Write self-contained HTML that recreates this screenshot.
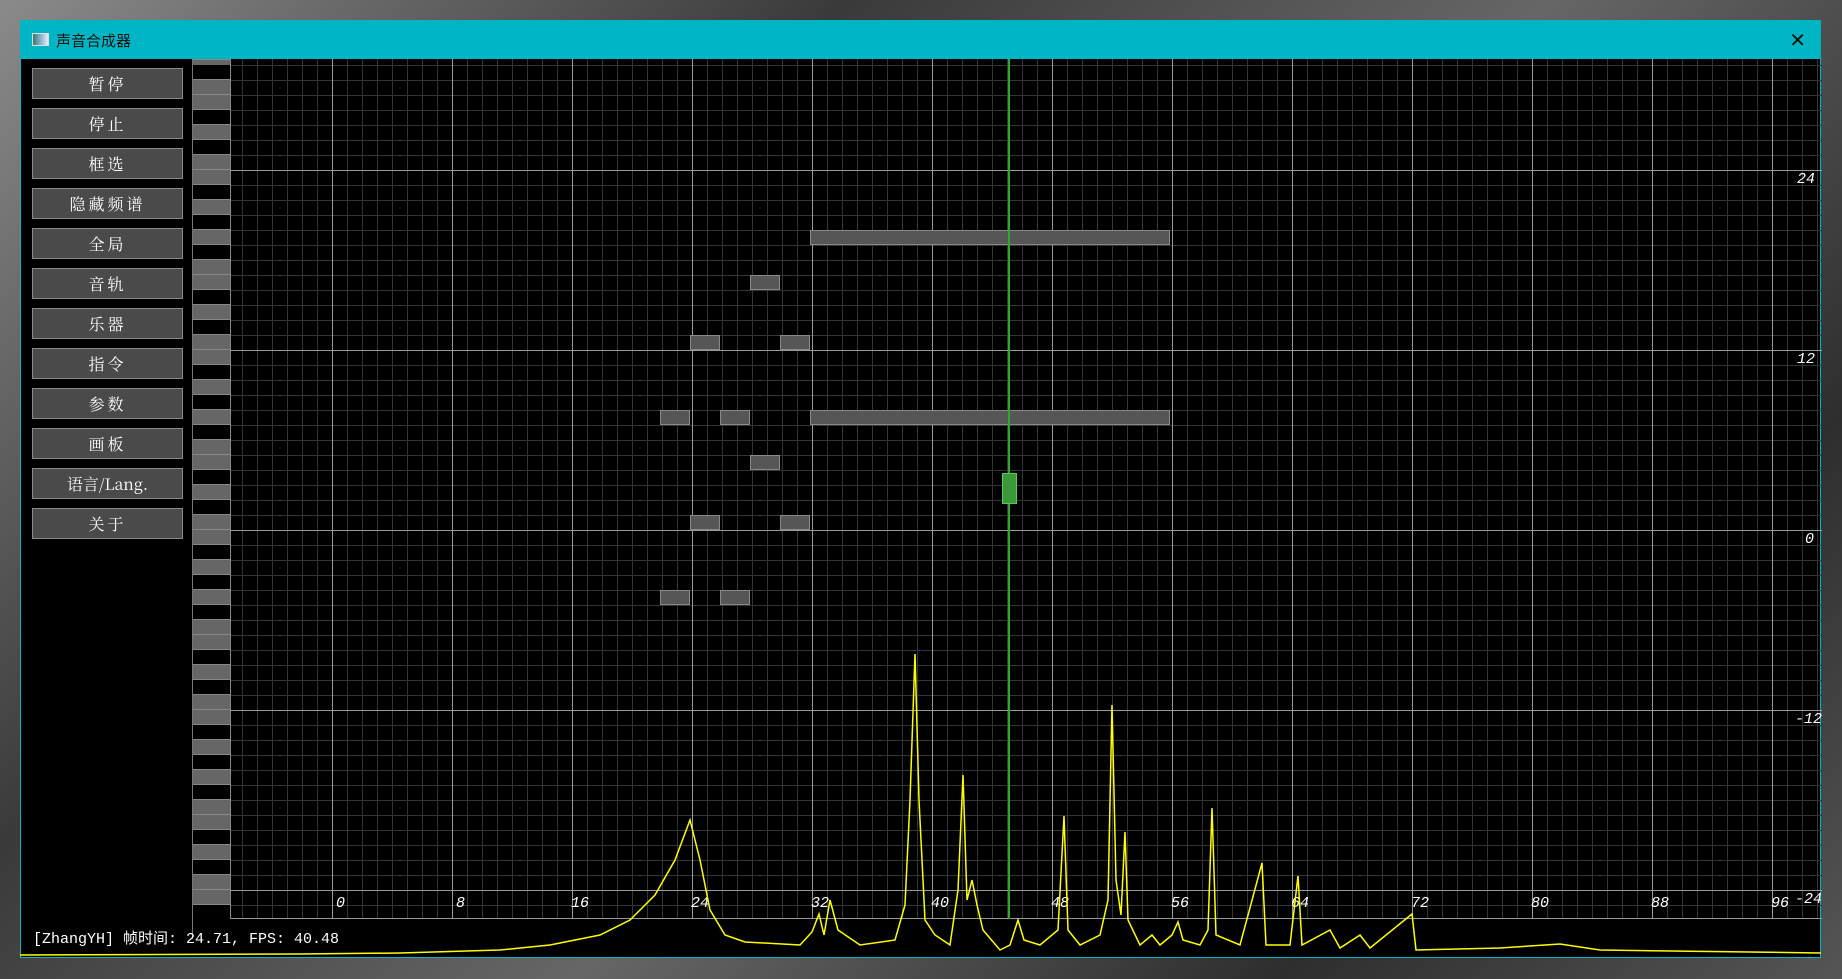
<!DOCTYPE html>
<html><head><meta charset="utf-8"><style>
*{margin:0;padding:0;box-sizing:border-box}
body{width:1842px;height:979px;overflow:hidden;background:#5a5a5a;position:relative;font-family:"Liberation Sans","Noto Sans CJK SC",sans-serif}
.bg{position:absolute;inset:0;background:linear-gradient(135deg,#8a8a8a 0%,#3a3a3a 30%,#666 55%,#2e2e2e 80%,#555 100%)}
.win{position:absolute;left:20px;top:20px;width:1801px;height:938px;background:#000;border:1px solid #00b4c3}
.title{position:absolute;left:0;top:0;width:100%;height:38px;background:#00b6c4}
.title .ic{position:absolute;left:11px;top:12px;width:17px;height:13px;background:linear-gradient(90deg,#3a7a6a,#9bd 60%,#eee);border:1px solid #ddd}
.title .t{position:absolute;left:35px;top:9px;font-size:15px;color:#111;font-family:"Noto Sans CJK SC",sans-serif}
.title .x{position:absolute;right:14px;top:7px;font-size:20px;color:#111}
.btn{position:absolute;left:11px;width:151px;height:31px;background:#4a4a4a;border:1px solid #8a8a8a;color:#fff;font-size:16px;text-align:center;line-height:29px;font-family:"Noto Serif CJK SC","Liberation Mono",serif;letter-spacing:3px}
.lp{position:absolute;left:0;top:38px;width:172px;height:880px;border-right:1px solid #777}
.keys{position:absolute;left:172px;top:38px;width:38px;height:860px;overflow:hidden;border-right:1px solid #888}
.grid{position:absolute;left:210px;top:38px;width:1591px;height:860px;
background-image:
linear-gradient(to right,#9a9a9a 1px,transparent 1px),
linear-gradient(to bottom,#9a9a9a 1px,transparent 1px),
linear-gradient(to right,#353535 1px,transparent 1px),
linear-gradient(to bottom,#353535 1px,transparent 1px);
background-size:120px 100%,100% 180px,15px 100%,100% 15px;
background-position:101px 0,0 111px,11px 0,0 6px;border-bottom:1px solid #999}
.n{position:absolute;height:15px;background:#565656;border:1px solid #8a8a8a}
.lbl{position:absolute;color:#fff;font-size:15px;font-family:"Liberation Mono",monospace;font-style:italic}
.status{position:absolute;left:12px;top:906px;color:#fff;font-size:15px;font-family:"Liberation Mono","Noto Sans CJK SC",monospace}
</style></head><body>
<div class="bg"></div>
<div class="win">
<div class="title"><div class="ic"></div><div class="t">声音合成器</div><div class="x">✕</div></div>
<div class="lp">
<div class="btn" style="top:9px">暂停</div>
<div class="btn" style="top:49px">停止</div>
<div class="btn" style="top:89px">框选</div>
<div class="btn" style="top:129px">隐藏频谱</div>
<div class="btn" style="top:169px">全局</div>
<div class="btn" style="top:209px">音轨</div>
<div class="btn" style="top:249px">乐器</div>
<div class="btn" style="top:289px">指令</div>
<div class="btn" style="top:329px">参数</div>
<div class="btn" style="top:369px">画板</div>
<div class="btn" style="top:409px;letter-spacing:0">语言/Lang.</div>
<div class="btn" style="top:449px">关于</div>
</div>
<div class="keys" style="background:repeating-linear-gradient(to bottom,#000 0 15px,#666 15px 45px,#000 45px 60px,#666 60px 75px,#000 75px 90px,#666 90px 120px,#000 120px 135px,#666 135px 150px,#000 150px 165px,#666 165px 180px);background-position:0 6px"></div>
<div class="keys" style="background:repeating-linear-gradient(to bottom,transparent 0 14px,#888 14px 15px);background-position:0 6px"></div>
<div class="grid"></div>
<div class="n" style="left:789px;top:209px;width:360px"></div>
<div class="n" style="left:729px;top:254px;width:30px"></div>
<div class="n" style="left:669px;top:314px;width:30px"></div>
<div class="n" style="left:759px;top:314px;width:30px"></div>
<div class="n" style="left:639px;top:389px;width:30px"></div>
<div class="n" style="left:699px;top:389px;width:30px"></div>
<div class="n" style="left:789px;top:389px;width:360px"></div>
<div class="n" style="left:729px;top:434px;width:30px"></div>
<div class="n" style="left:669px;top:494px;width:30px"></div>
<div class="n" style="left:759px;top:494px;width:30px"></div>
<div class="n" style="left:639px;top:569px;width:30px"></div>
<div class="n" style="left:699px;top:569px;width:30px"></div>
<div style="position:absolute;left:987px;top:38px;width:2px;height:860px;background:#2fa82f"></div>
<div style="position:absolute;left:981px;top:452px;width:15px;height:31px;background:#3a9a3a;border:1px solid #5c5"></div>
<div class="lbl" style="left:315px;top:874px">0</div>
<div class="lbl" style="left:435px;top:874px">8</div>
<div class="lbl" style="left:550px;top:874px">16</div>
<div class="lbl" style="left:670px;top:874px">24</div>
<div class="lbl" style="left:790px;top:874px">32</div>
<div class="lbl" style="left:910px;top:874px">40</div>
<div class="lbl" style="left:1030px;top:874px">48</div>
<div class="lbl" style="left:1150px;top:874px">56</div>
<div class="lbl" style="left:1270px;top:874px">64</div>
<div class="lbl" style="left:1390px;top:874px">72</div>
<div class="lbl" style="left:1510px;top:874px">80</div>
<div class="lbl" style="left:1630px;top:874px">88</div>
<div class="lbl" style="left:1750px;top:874px">96</div>
<div class="lbl" style="left:1774px;top:870px">-24</div>
<div class="lbl" style="left:1774px;top:690px">-12</div>
<div class="lbl" style="left:1784px;top:510px">0</div>
<div class="lbl" style="left:1776px;top:330px">12</div>
<div class="lbl" style="left:1776px;top:150px">24</div>
<div class="status">[ZhangYH] 帧时间: 24.71, FPS: 40.48</div>
</div>
<svg style="position:absolute;left:0;top:0" width="1842" height="979">
<polyline fill="none" stroke="#ffff00" stroke-width="1.5" points="20,955 300,954 400,953 500,950 550,945 600,935 630,920 655,895 675,860 690,820 700,860 710,910 725,935 745,942 800,945 812,932 819,914 824,935 830,900 838,930 860,945 895,940 905,905 910,800 915,654 919,800 925,920 935,935 950,945 958,890 963,775 967,900 972,880 977,905 983,930 1000,950 1010,945 1018,920 1024,940 1040,945 1058,930 1064,816 1068,930 1080,945 1100,935 1108,900 1112,705 1116,880 1121,915 1125,832 1128,920 1140,945 1152,935 1160,945 1172,935 1178,922 1183,940 1200,945 1208,930 1212,808 1216,935 1240,945 1262,863 1266,945 1290,945 1298,876 1302,945 1330,930 1340,948 1360,935 1370,948 1412,914 1416,950 1500,948 1560,944 1600,950 1821,953"/>
</svg>
</body></html>
